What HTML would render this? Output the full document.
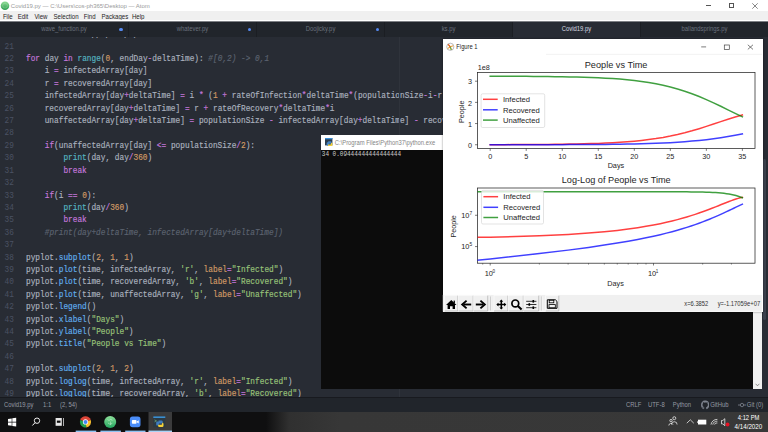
<!DOCTYPE html>
<html><head><meta charset="utf-8">
<style>
*{margin:0;padding:0;box-sizing:border-box}
html,body{width:768px;height:432px;overflow:hidden;background:#282c34;font-family:"Liberation Sans",sans-serif}
.a{position:absolute;white-space:pre}
#title{left:0;top:0;width:768px;height:11px;background:#fff}
#menu{left:0;top:11px;width:768px;height:9px;background:#f0f0f0}
#menuw{left:0;top:20px;width:768px;height:1px;background:#fff}
.mi{position:absolute;top:0.9px;font-size:6.1px;line-height:9px;color:#1e1e1e;transform:scaleY(1.15);transform-origin:0 6.5px}
#menusep{left:0;top:21px;width:768px;height:1px;background:#7d7f84}
#tabs{left:0;top:22px;width:768px;height:15px;background:#21252b}
.tab{position:absolute;top:0;height:15px;width:128px;border-left:1px solid #1b1e23;color:#6b717d;font-size:5.9px;line-height:15px;text-align:center}
.tt{display:inline-block;transform:scaleY(1.18);transform-origin:50% 9.4px}
.tab.act{background:#282c34;color:#d7dae0}
.dot{position:absolute;top:5.6px;width:3.6px;height:3.6px;border-radius:50%;background:#568af2}
#editor{left:0;top:37px;width:768px;height:360px;background:#282c34;overflow:hidden}
.gn{position:absolute;left:0;width:13.8px;text-align:right;font-family:"Liberation Mono",monospace;font-size:7.77px;line-height:10px;color:#4b5263;transform:scaleY(1.12);transform-origin:0 7.6px}
.ln{position:absolute;left:26px;font-family:"Liberation Mono",monospace;font-size:7.77px;letter-spacing:0.012px;line-height:10px;white-space:pre;transform:scaleY(1.12);transform-origin:0 7.6px;-webkit-text-stroke-width:0.15px}
.i{font-style:italic}
#status{left:0;top:396.7px;width:768px;height:15.3px;background:#21252b;border-top:0.6px solid #181a1f;color:#959aa3;font-size:5.9px}
#status .a{top:3.1px;line-height:9px;transform:scaleY(1.12);transform-origin:0 6.5px}
#taskbar{left:0;top:412px;width:768px;height:20px;background:linear-gradient(90deg,#0f0f10 0px,#0f0f10 266px,#303030 289px,#373737 340px,#383838 768px)}
#console{left:320.8px;top:134.8px;width:441.4px;height:254.2px;background:#0c0c0c}
#ctitle{left:0;top:0;width:441.4px;height:15px;background:#fff}
#figure{left:442.5px;top:39.2px;width:320.2px;height:272.6px;background:#fff;box-shadow:0 0 2px rgba(0,0,0,0.45)}
</style></head><body>
<div id="title" class="a">
  <svg class="a" style="left:0;top:0" width="12" height="11" viewBox="0 0 12 11"><defs><linearGradient id="tg" x1="0" y1="0" x2="0" y2="1"><stop offset="0" stop-color="#8fdc95"/><stop offset="1" stop-color="#2f9e52"/></linearGradient></defs><circle cx="5" cy="5.7" r="4.3" fill="url(#tg)"/><circle cx="5" cy="5.7" r="2.4" fill="none" stroke="#c9efcc" stroke-width="0.4" opacity="0.6"/></svg>
  <div class="a" style="left:10.8px;top:1.6px;font-size:6px;line-height:9px;color:#9a9a9a">Covid19.py — C:\Users\cos-ph365\Desktop — Atom</div>
  <div class="a" style="left:706px;top:5px;width:5.2px;height:0.7px;background:#555"></div>
  <div class="a" style="left:729px;top:3px;width:5px;height:5px;border:0.7px solid #555"></div>
  <svg class="a" style="left:752px;top:2.5px" width="6" height="6" viewBox="0 0 6 6"><path d="M0.3 0.3L5.7 5.7M5.7 0.3L0.3 5.7" stroke="#555" stroke-width="0.7"/></svg>
</div>
<div id="menu" class="a">
  <div class="mi" style="left:2.9px">File</div>
  <div class="mi" style="left:17.7px">Edit</div>
  <div class="mi" style="left:34.4px">View</div>
  <div class="mi" style="left:53.5px">Selection</div>
  <div class="mi" style="left:83.7px">Find</div>
  <div class="mi" style="left:101.5px">Packages</div>
  <div class="mi" style="left:131.9px">Help</div>
</div>
<div id="menuw" class="a"></div><div id="menusep" class="a"></div>
<div id="tabs" class="a">
  <div class="tab" style="left:0;border-left:none"><span class="tt">wave_function.py</span><div class="dot" style="left:119px"></div></div>
  <div class="tab" style="left:128px"><span class="tt">whatever.py</span><div class="dot" style="left:118.5px"></div></div>
  <div class="tab" style="left:256px"><span class="tt">Doojicky.py</span><div class="dot" style="left:118.5px"></div></div>
  <div class="tab" style="left:384px"><span class="tt">ks.py</span></div>
  <div class="tab act" style="left:512px"><span class="tt">Covid19.py</span></div>
  <div class="tab" style="left:640px"><span class="tt">ballandsprings.py</span></div>
</div>
<div id="editor" class="a">
<div class="gn" style="top:-7.81px"></div>
<div class="ln" style="top:-7.81px"><span style="color:#abb2bf">              pp p   p p</span></div>
<div class="gn" style="top:4.60px">21</div>
<div class="ln" style="top:4.60px"></div>
<div class="gn" style="top:17.01px">22</div>
<div class="ln" style="top:17.01px"><span style="color:#c678dd">for</span><span style="color:#abb2bf"> day </span><span style="color:#c678dd">in</span><span style="color:#abb2bf"> </span><span style="color:#56b6c2">range</span><span style="color:#abb2bf">(</span><span style="color:#d19a66">0</span><span style="color:#abb2bf">, endDay</span><span style="color:#c678dd">-</span><span style="color:#abb2bf">deltaTime): </span><span style="color:#5c6370" class=i>#[0,2) -&gt; 0,1</span></div>
<div class="gn" style="top:29.42px">23</div>
<div class="ln" style="top:29.42px"><span style="color:#abb2bf">    i </span><span style="color:#c678dd">=</span><span style="color:#abb2bf"> infectedArray[day]</span></div>
<div class="gn" style="top:41.83px">24</div>
<div class="ln" style="top:41.83px"><span style="color:#abb2bf">    r </span><span style="color:#c678dd">=</span><span style="color:#abb2bf"> recoveredArray[day]</span></div>
<div class="gn" style="top:54.24px">25</div>
<div class="ln" style="top:54.24px"><span style="color:#abb2bf">    infectedArray[day</span><span style="color:#c678dd">+</span><span style="color:#abb2bf">deltaTime] </span><span style="color:#c678dd">=</span><span style="color:#abb2bf"> i </span><span style="color:#c678dd">*</span><span style="color:#abb2bf"> (</span><span style="color:#d19a66">1</span><span style="color:#abb2bf"> </span><span style="color:#c678dd">+</span><span style="color:#abb2bf"> rateOfInfection</span><span style="color:#c678dd">*</span><span style="color:#abb2bf">deltaTime</span><span style="color:#c678dd">*</span><span style="color:#abb2bf">(populationSize</span><span style="color:#c678dd">-</span><span style="color:#abb2bf">i</span><span style="color:#c678dd">-</span><span style="color:#abb2bf">r)</span></div>
<div class="gn" style="top:66.65px">26</div>
<div class="ln" style="top:66.65px"><span style="color:#abb2bf">    recoveredArray[day</span><span style="color:#c678dd">+</span><span style="color:#abb2bf">deltaTime] </span><span style="color:#c678dd">=</span><span style="color:#abb2bf"> r </span><span style="color:#c678dd">+</span><span style="color:#abb2bf"> rateOfRecovery</span><span style="color:#c678dd">*</span><span style="color:#abb2bf">deltaTime</span><span style="color:#c678dd">*</span><span style="color:#abb2bf">i</span></div>
<div class="gn" style="top:79.06px">27</div>
<div class="ln" style="top:79.06px"><span style="color:#abb2bf">    unaffectedArray[day</span><span style="color:#c678dd">+</span><span style="color:#abb2bf">deltaTime] </span><span style="color:#c678dd">=</span><span style="color:#abb2bf"> populationSize </span><span style="color:#c678dd">-</span><span style="color:#abb2bf"> infectedArray[day</span><span style="color:#c678dd">+</span><span style="color:#abb2bf">deltaTime] </span><span style="color:#c678dd">-</span><span style="color:#abb2bf"> recoveredArray</span></div>
<div class="gn" style="top:91.47px">28</div>
<div class="ln" style="top:91.47px"></div>
<div class="gn" style="top:103.88px">29</div>
<div class="ln" style="top:103.88px"><span style="color:#abb2bf">    </span><span style="color:#c678dd">if</span><span style="color:#abb2bf">(unaffectedArray[day] </span><span style="color:#c678dd">&lt;=</span><span style="color:#abb2bf"> populationSize</span><span style="color:#c678dd">/</span><span style="color:#d19a66">2</span><span style="color:#abb2bf">):</span></div>
<div class="gn" style="top:116.29px">30</div>
<div class="ln" style="top:116.29px"><span style="color:#abb2bf">        </span><span style="color:#56b6c2">print</span><span style="color:#abb2bf">(day, day</span><span style="color:#c678dd">/</span><span style="color:#d19a66">360</span><span style="color:#abb2bf">)</span></div>
<div class="gn" style="top:128.70px">31</div>
<div class="ln" style="top:128.70px"><span style="color:#abb2bf">        </span><span style="color:#c678dd">break</span></div>
<div class="gn" style="top:141.11px">32</div>
<div class="ln" style="top:141.11px"></div>
<div class="gn" style="top:153.52px">33</div>
<div class="ln" style="top:153.52px"><span style="color:#abb2bf">    </span><span style="color:#c678dd">if</span><span style="color:#abb2bf">(i </span><span style="color:#c678dd">==</span><span style="color:#abb2bf"> </span><span style="color:#d19a66">0</span><span style="color:#abb2bf">):</span></div>
<div class="gn" style="top:165.93px">34</div>
<div class="ln" style="top:165.93px"><span style="color:#abb2bf">        </span><span style="color:#56b6c2">print</span><span style="color:#abb2bf">(day</span><span style="color:#c678dd">/</span><span style="color:#d19a66">360</span><span style="color:#abb2bf">)</span></div>
<div class="gn" style="top:178.34px">35</div>
<div class="ln" style="top:178.34px"><span style="color:#abb2bf">        </span><span style="color:#c678dd">break</span></div>
<div class="gn" style="top:190.75px">36</div>
<div class="ln" style="top:190.75px"><span style="color:#abb2bf">    </span><span style="color:#5c6370" class=i>#print(day+deltaTime, infectedArray[day+deltaTime])</span></div>
<div class="gn" style="top:203.16px">37</div>
<div class="ln" style="top:203.16px"></div>
<div class="gn" style="top:215.57px">38</div>
<div class="ln" style="top:215.57px"><span style="color:#abb2bf">pyplot.</span><span style="color:#61afef">subplot</span><span style="color:#abb2bf">(</span><span style="color:#d19a66">2</span><span style="color:#abb2bf">, </span><span style="color:#d19a66">1</span><span style="color:#abb2bf">, </span><span style="color:#d19a66">1</span><span style="color:#abb2bf">)</span></div>
<div class="gn" style="top:227.98px">39</div>
<div class="ln" style="top:227.98px"><span style="color:#abb2bf">pyplot.</span><span style="color:#61afef">plot</span><span style="color:#abb2bf">(time, infectedArray, </span><span style="color:#98c379">&#x27;r&#x27;</span><span style="color:#abb2bf">, </span><span style="color:#d19a66">label</span><span style="color:#c678dd">=</span><span style="color:#98c379">&quot;Infected&quot;</span><span style="color:#abb2bf">)</span></div>
<div class="gn" style="top:240.39px">40</div>
<div class="ln" style="top:240.39px"><span style="color:#abb2bf">pyplot.</span><span style="color:#61afef">plot</span><span style="color:#abb2bf">(time, recoveredArray, </span><span style="color:#98c379">&#x27;b&#x27;</span><span style="color:#abb2bf">, </span><span style="color:#d19a66">label</span><span style="color:#c678dd">=</span><span style="color:#98c379">&quot;Recovered&quot;</span><span style="color:#abb2bf">)</span></div>
<div class="gn" style="top:252.80px">41</div>
<div class="ln" style="top:252.80px"><span style="color:#abb2bf">pyplot.</span><span style="color:#61afef">plot</span><span style="color:#abb2bf">(time, unaffectedArray, </span><span style="color:#98c379">&#x27;g&#x27;</span><span style="color:#abb2bf">, </span><span style="color:#d19a66">label</span><span style="color:#c678dd">=</span><span style="color:#98c379">&quot;Unaffected&quot;</span><span style="color:#abb2bf">)</span></div>
<div class="gn" style="top:265.21px">42</div>
<div class="ln" style="top:265.21px"><span style="color:#abb2bf">pyplot.</span><span style="color:#61afef">legend</span><span style="color:#abb2bf">()</span></div>
<div class="gn" style="top:277.62px">43</div>
<div class="ln" style="top:277.62px"><span style="color:#abb2bf">pyplot.</span><span style="color:#61afef">xlabel</span><span style="color:#abb2bf">(</span><span style="color:#98c379">&quot;Days&quot;</span><span style="color:#abb2bf">)</span></div>
<div class="gn" style="top:290.03px">44</div>
<div class="ln" style="top:290.03px"><span style="color:#abb2bf">pyplot.</span><span style="color:#61afef">ylabel</span><span style="color:#abb2bf">(</span><span style="color:#98c379">&quot;People&quot;</span><span style="color:#abb2bf">)</span></div>
<div class="gn" style="top:302.44px">45</div>
<div class="ln" style="top:302.44px"><span style="color:#abb2bf">pyplot.</span><span style="color:#61afef">title</span><span style="color:#abb2bf">(</span><span style="color:#98c379">&quot;People vs Time&quot;</span><span style="color:#abb2bf">)</span></div>
<div class="gn" style="top:314.85px">46</div>
<div class="ln" style="top:314.85px"></div>
<div class="gn" style="top:327.26px">47</div>
<div class="ln" style="top:327.26px"><span style="color:#abb2bf">pyplot.</span><span style="color:#61afef">subplot</span><span style="color:#abb2bf">(</span><span style="color:#d19a66">2</span><span style="color:#abb2bf">, </span><span style="color:#d19a66">1</span><span style="color:#abb2bf">, </span><span style="color:#d19a66">2</span><span style="color:#abb2bf">)</span></div>
<div class="gn" style="top:339.67px">48</div>
<div class="ln" style="top:339.67px"><span style="color:#abb2bf">pyplot.</span><span style="color:#61afef">loglog</span><span style="color:#abb2bf">(time, infectedArray, </span><span style="color:#98c379">&#x27;r&#x27;</span><span style="color:#abb2bf">, </span><span style="color:#d19a66">label</span><span style="color:#c678dd">=</span><span style="color:#98c379">&quot;Infected&quot;</span><span style="color:#abb2bf">)</span></div>
<div class="gn" style="top:352.08px">49</div>
<div class="ln" style="top:352.08px"><span style="color:#abb2bf">pyplot.</span><span style="color:#61afef">loglog</span><span style="color:#abb2bf">(time, recoveredArray, </span><span style="color:#98c379">&#x27;b&#x27;</span><span style="color:#abb2bf">, </span><span style="color:#d19a66">label</span><span style="color:#c678dd">=</span><span style="color:#98c379">&quot;Recovered&quot;</span><span style="color:#abb2bf">)</span></div>
<div class="a" style="left:398.8px;top:0;width:0.8px;height:360px;background:#2f333b"></div>
<div class="a" style="left:763.3px;top:122px;width:3px;height:161px;background:#3a3f4b;border-radius:1.5px"></div>
</div>
<div id="status" class="a">
  <div class="a" style="left:4px">Covid19.py</div>
  <div class="a" style="left:43px">1:1</div>
  <div class="a" style="left:60px">(2, 54)</div>
  <div class="a" style="left:626px">CRLF</div>
  <div class="a" style="left:648px">UTF-8</div>
  <div class="a" style="left:672.8px">Python</div>
  <svg class="a" style="left:700.5px;top:3.6px" width="8.4" height="8.4" viewBox="0 0 16 16"><path fill="#7d838e" d="M8 0C3.58 0 0 3.58 0 8c0 3.54 2.29 6.53 5.47 7.59.4.07.55-.17.55-.38 0-.19-.01-.82-.01-1.49-2.01.37-2.53-.49-2.69-.94-.09-.23-.48-.94-.82-1.13-.28-.15-.68-.52-.01-.53.63-.01 1.08.58 1.23.82.72 1.21 1.87.87 2.33.66.07-.52.28-.87.51-1.07-1.78-.2-3.64-.89-3.64-3.95 0-.87.31-1.59.82-2.15-.08-.2-.36-1.02.08-2.12 0 0 .67-.21 2.2.82.64-.18 1.32-.27 2-.27.68 0 1.36.09 2 .27 1.53-1.04 2.2-.82 2.2-.82.44 1.1.16 1.92.08 2.12.51.56.82 1.27.82 2.15 0 3.07-1.87 3.75-3.65 3.95.29.25.54.73.54 1.48 0 1.07-.01 1.93-.01 2.2 0 .21.15.46.55.38A8.013 8.013 0 0016 8c0-4.42-3.58-8-8-8z"/></svg>
  <div class="a" style="left:710.2px">GitHub</div>
  <svg class="a" style="left:737.5px;top:5.5px" width="8" height="5" viewBox="0 0 8 5"><circle cx="4" cy="2.5" r="1.6" fill="none" stroke="#7d838e" stroke-width="0.8"/><path d="M0 2.5H2.4M5.6 2.5H8" stroke="#7d838e" stroke-width="0.8"/></svg>
  <div class="a" style="left:746.8px">Git (0)</div>
</div>
<div id="taskbar" class="a">
  <svg class="a" style="left:0;top:0" width="768" height="20" viewBox="0 412 768 20">
    <g fill="#ffffff">
      <path d="M8 418.9 L11.7 418.4 V421.8 H8Z M12.3 418.3 L16.2 417.8 V421.8 H12.3Z M8 422.4 H11.7 V425.8 L8 425.3Z M12.3 422.4 H16.2 V426.4 L12.3 425.9Z"/>
    </g>
    <circle cx="37" cy="420.7" r="2.7" fill="none" stroke="#fff" stroke-width="0.9"/>
    <path d="M35.1 422.6 L32.4 425.5" stroke="#fff" stroke-width="1"/>
    <rect x="55.6" y="418" width="6.2" height="7.8" fill="#e8e8e8"/><rect x="56.9" y="420.6" width="3.6" height="2.2" fill="#0b0b0c"/><rect x="63.2" y="418" width="0.8" height="8" fill="#d8d8d8"/>
    <!-- chrome -->
    <path d="M85.5 421.9 L90.76 419.98 A5.6 5.6 0 0 0 80.24 419.98Z" fill="#db4437"/><path d="M85.5 421.9 L80.24 419.98 A5.6 5.6 0 0 0 86.47 427.41Z" fill="#1e9e50"/><path d="M85.5 421.9 L86.47 427.41 A5.6 5.6 0 0 0 90.76 419.98Z" fill="#fbc02d"/><circle cx="85.5" cy="421.9" r="2.6" fill="#fff"/>
    <circle cx="85.5" cy="421.9" r="2" fill="#4285f4"/>
    <!-- atom-ish green -->
    <defs><linearGradient id="gg" x1="0" y1="0" x2="0" y2="1"><stop offset="0" stop-color="#8ee09a"/><stop offset="1" stop-color="#22a45e"/></linearGradient></defs>
    <circle cx="110.2" cy="422" r="6" fill="url(#gg)"/>
    <path d="M107.5 419.5 l1.5 1 l2 -1.5 l1.2 1.8 M108 423 l2 1.3 l2.3 -1 M110.6 421.5 v3.5" stroke="#d8f5dc" stroke-width="0.6" fill="none" opacity="0.8"/>
    <!-- zoom -->
    <rect x="129.9" y="416.6" width="10.6" height="10.6" rx="2.6" fill="#4a8cf7"/>
    <rect x="131.9" y="420" width="4.6" height="3.8" rx="0.8" fill="#fff"/>
    <path d="M136.8 421.6 L138.7 420.3 V423.5 L136.8 422.2Z" fill="#fff"/>
    <!-- python active -->
    <rect x="148.5" y="412" width="23.5" height="20" fill="#3b3b3c"/>
    <g transform="translate(0 0.9)"><rect x="153.3" y="415.5" width="12" height="11" fill="#2b3a44"/>
    <rect x="153.3" y="415.5" width="12" height="1.6" fill="#3b8ed0"/>
    <path d="M154.5 419 l2 1 -2 1" stroke="#7fc27f" stroke-width="0.6" fill="none"/>
    <path d="M158.5 419.5 h3 a1.2 1.2 0 0 1 1.2 1.2 v2 h-3 a1 1 0 0 0 -1 1 v1 h-1.3 a1.2 1.2 0 0 1 -1.2 -1.2 v-1.8 a1.2 1.2 0 0 1 1.2 -1.2 h1.3z" fill="#3e7bbd"/>
    <path d="M163.5 422.5 v2.3 a1.2 1.2 0 0 1 -1.2 1.2 h-3 a1.2 1.2 0 0 1 -1.2 -1.2 v-1 h3 a1 1 0 0 0 1 -1 v-1 h0.2 a1.2 1.2 0 0 1 1.2 1.2z" fill="#f5d23a"/>
    </g>
    <g fill="#8ec3f2">
      <rect x="75.7" y="430.6" width="20.5" height="1.4"/>
      <rect x="100.4" y="430.6" width="20.5" height="1.4"/>
      <rect x="125.2" y="430.6" width="20.3" height="1.4"/>
      <rect x="148.5" y="430.6" width="23.5" height="1.4" fill="#a9d3f7"/>
    </g>
    <!-- tray -->
    <g stroke="#fff" stroke-width="0.7" fill="none">
      <circle cx="674.3" cy="418.2" r="1.5"/>
      <path d="M671.5 424.5 a2.8 2.8 0 0 1 5.6 0"/>
      <circle cx="671" cy="420.6" r="1.2"/>
      <path d="M668.8 425.5 a2.2 2.2 0 0 1 4.2 -0.8"/>
      <path d="M686.8 423.2 L690.3 419.8 L693.8 423.2"/>
      <path d="M711 424.6 a6 6 0 0 1 6.4 -5.2 M712.8 424.6 a4 4 0 0 1 4.6 -3.4 M714.6 424.6 a2.2 2.2 0 0 1 2.8 -1.6" />
      <path d="M721.5 420.5 h1.3 l2 -1.8 v7 l-2 -1.8 h-1.3z"/>
    </g>
    <rect x="698" y="419.7" width="8.3" height="4.8" fill="#fff"/>
    <rect x="697.3" y="421.3" width="0.7" height="1.6" fill="#fff"/>
    <circle cx="727.6" cy="424.5" r="1.9" fill="#e81123"/>
    <text transform="translate(748.6 419.6) scale(1 1.12)" font-size="5.8" fill="#fff" text-anchor="middle" font-family="Liberation Sans">4:12 PM</text>
    <text transform="translate(748.4 428.8) scale(1 1.12)" font-size="6.2" fill="#fff" text-anchor="middle" font-family="Liberation Sans">4/14/2020</text>
  </svg>
</div>
<div id="console" class="a">
  <div id="ctitle" class="a">
    <svg class="a" style="left:4.2px;top:3px" width="8" height="8" viewBox="0 0 8 8"><rect x="0" y="0" width="7.4" height="7.4" fill="#2c3e50"/><rect x="0" y="0" width="7.4" height="1.3" fill="#3c8fd8"/><path d="M3.5 3.2h2a1 1 0 0 1 1 1v1.5h-2a.8.8 0 0 0-.8.8v1.3h-1a1 1 0 0 1-1-1v-1.6a1 1 0 0 1 1-1z" fill="#4584c4"/><path d="M7.4 5.6v1.6a1 1 0 0 1-1 1h-2.4a1 1 0 0 1-1-1v-.6h2.2a.8.8 0 0 0 .8-.8v-1h.4a1 1 0 0 1 1 .8z" fill="#f3d13e"/></svg>
    <div class="a" style="left:14px;top:4.1px;font-size:5.85px;line-height:9px;color:#858585;transform:scaleY(1.15);transform-origin:0 6.5px">C:\Program Files\Python37\python.exe</div>
  </div>
  <div class="a" style="left:1px;top:16px;font-family:'Liberation Mono',monospace;font-size:6px;line-height:8px;color:#c8c8c8;transform:scaleY(1.25);transform-origin:0 6px">34 0.09444444444444444</div>
  <div class="a" style="left:432.4px;top:14.7px;width:9px;height:239.5px;background:#f0f0f0"></div>
  <svg class="a" style="left:434.5px;top:248px" width="5" height="4" viewBox="0 0 5 4"><path d="M0.6 0.8 L2.5 2.8 L4.4 0.8" stroke="#606060" stroke-width="0.7" fill="none"/></svg>
</div>
<div id="figure" class="a"></div>
<svg class="a" style="left:0;top:0" width="768" height="432" viewBox="0 0 768 432" fill="none" font-family="Liberation Sans">
  <defs><clipPath id="c1"><rect x="477.6" y="72.4" width="277.4" height="76.2"/></clipPath><clipPath id="c2"><rect x="477.6" y="188" width="277.4" height="75.2"/></clipPath></defs>
  <!-- figure title bar -->
  <circle cx="450.3" cy="46.8" r="3.6" fill="#fff" stroke="#777" stroke-width="0.5"/>
  <path d="M450.3 46.8 L448.2 44.3 M450.3 46.8 L453.2 45.8 M450.3 46.8 L451.3 49.8 M450.3 46.8 L447.6 48.6" stroke-width="1.1" stroke="#e8a33b"/>
  <path d="M450.3 46.8 L448.2 44.3" stroke="#e05a2a" stroke-width="1.1"/>
  <path d="M450.3 46.8 L451.3 49.8" stroke="#5aa64b" stroke-width="1.1"/>
  <text transform="translate(456.3 49.1) scale(1 1.15)" font-size="5.8" fill="#222">Figure 1</text>
  <path d="M701.2 46.9 H706.1" stroke="#444" stroke-width="0.7"/>
  <rect x="724.3" y="45" width="5" height="4.5" stroke="#444" stroke-width="0.7"/>
  <path d="M747.8 44.8 L753 49.4 M753 44.8 L747.8 49.4" stroke="#444" stroke-width="0.7"/>
  <path d="M546 54.4 H762" stroke="#f0f0f0" stroke-width="0.8"/>
  <!-- toolbar -->
  <rect x="442.8" y="294.9" width="319.1" height="16.7" fill="#f0f0f0"/>
  <rect x="444.70" y="295.6" width="13.20" height="15.4" fill="#f0f0f0" stroke="#fdfdfd" stroke-width="0.6"/><path d="M457.90 295.6 V311 H444.70" stroke="#a0a0a0" stroke-width="0.6"/><rect x="458.50" y="295.6" width="14.70" height="15.4" fill="#f0f0f0" stroke="#fdfdfd" stroke-width="0.6"/><path d="M473.20 295.6 V311 H458.50" stroke="#a0a0a0" stroke-width="0.6"/><rect x="473.80" y="295.6" width="13.90" height="15.4" fill="#f0f0f0" stroke="#fdfdfd" stroke-width="0.6"/><path d="M487.70 295.6 V311 H473.80" stroke="#a0a0a0" stroke-width="0.6"/><rect x="494.00" y="295.6" width="13.90" height="15.4" fill="#f0f0f0" stroke="#fdfdfd" stroke-width="0.6"/><path d="M507.90 295.6 V311 H494.00" stroke="#a0a0a0" stroke-width="0.6"/><rect x="508.50" y="295.6" width="14.80" height="15.4" fill="#f0f0f0" stroke="#fdfdfd" stroke-width="0.6"/><path d="M523.30 295.6 V311 H508.50" stroke="#a0a0a0" stroke-width="0.6"/><rect x="523.90" y="295.6" width="14.80" height="15.4" fill="#f0f0f0" stroke="#fdfdfd" stroke-width="0.6"/><path d="M538.70 295.6 V311 H523.90" stroke="#a0a0a0" stroke-width="0.6"/><rect x="545.70" y="295.6" width="13.10" height="15.4" fill="#f0f0f0" stroke="#fdfdfd" stroke-width="0.6"/><path d="M558.80 295.6 V311 H545.70" stroke="#a0a0a0" stroke-width="0.6"/><path d="M490.7 296.5 V310.5" stroke="#a0a0a0" stroke-width="0.6"/><path d="M491.3 296.5 V310.5" stroke="#fff" stroke-width="0.6"/><path d="M541.4 296.5 V310.5" stroke="#a0a0a0" stroke-width="0.6"/><path d="M542.0 296.5 V310.5" stroke="#fff" stroke-width="0.6"/><path d="M446 305 L451.3 300 L456.5 305 H455 V309 H452.6 V306.3 H450 V309 H447.6 V305Z" fill="#000"/><rect x="453.6" y="300.6" width="1.3" height="2.5" fill="#000"/><path d="M471.2 304.5 H464" stroke="#000" stroke-width="1.9"/><path d="M466.6 300.6 L462.2 304.5 L466.6 308.4" stroke="#000" stroke-width="1.9" fill="none" stroke-linejoin="miter"/><path d="M475.8 304.5 H483" stroke="#000" stroke-width="1.9"/><path d="M480.4 300.6 L484.8 304.5 L480.4 308.4" stroke="#000" stroke-width="1.9" fill="none"/><path d="M501.3 300.6 V308.6 M497.3 304.6 H505.3" stroke="#000" stroke-width="1.5"/><path d="M501.3 299.6 L499.4 301.8 H503.2Z M501.3 309.6 L499.4 307.4 H503.2Z M496.3 304.6 L498.5 302.7 V306.5Z M506.3 304.6 L504.1 302.7 V306.5Z" fill="#000"/><circle cx="515.3" cy="303.4" r="3.4" stroke="#000" stroke-width="1.7" fill="none"/><path d="M517.8 305.9 L521.6 309.6" stroke="#000" stroke-width="2.1"/><path d="M526.2 301.3 H536.4 M526.2 304.5 H536.4 M526.2 307.7 H536.4" stroke="#000" stroke-width="0.8"/><rect x="532.5" y="300" width="1.6" height="2.6" fill="#000"/><rect x="528.5" y="303.2" width="1.6" height="2.6" fill="#000"/><rect x="532.5" y="306.4" width="1.6" height="2.6" fill="#000"/><path d="M547.3 299.8 H555.4 L557 301.4 V308.3 H547.3Z" stroke="#000" stroke-width="1" fill="none"/><rect x="549.2" y="300.2" width="4.6" height="2.6" stroke="#000" stroke-width="0.8" fill="none"/><rect x="549" y="304.6" width="6.3" height="3.2" stroke="#000" stroke-width="0.8" fill="none"/>
  <text transform="translate(684.3 305.6) scale(1 1.18)" font-size="5.8" fill="#333">x=6.3852</text>
  <text transform="translate(717.7 305.6) scale(1 1.18)" font-size="5.86" fill="#333">y=-1.17059e+07</text>
  <!-- top axes -->
  <rect x="477.6" y="72.4" width="277.4" height="76.2" stroke="#262626" stroke-width="0.75"/><rect x="477.6" y="188" width="277.4" height="75.2" stroke="#262626" stroke-width="0.75"/><path d="M475 144.74 H477.6" stroke="#262626" stroke-width="0.6"/><text x="472" y="147.94" font-size="7.25" fill="#262626" text-anchor="end">0</text><path d="M475 123.56 H477.6" stroke="#262626" stroke-width="0.6"/><text x="472" y="126.76" font-size="7.25" fill="#262626" text-anchor="end">1</text><path d="M475 102.38 H477.6" stroke="#262626" stroke-width="0.6"/><text x="472" y="105.58" font-size="7.25" fill="#262626" text-anchor="end">2</text><path d="M475 81.20 H477.6" stroke="#262626" stroke-width="0.6"/><text x="472" y="84.40" font-size="7.25" fill="#262626" text-anchor="end">3</text><path d="M490.20 148.6 V150.9" stroke="#262626" stroke-width="0.6"/><text x="490.20" y="159.1" font-size="7.25" fill="#262626" text-anchor="middle">0</text><path d="M526.23 148.6 V150.9" stroke="#262626" stroke-width="0.6"/><text x="526.23" y="159.1" font-size="7.25" fill="#262626" text-anchor="middle">5</text><path d="M562.25 148.6 V150.9" stroke="#262626" stroke-width="0.6"/><text x="562.25" y="159.1" font-size="7.25" fill="#262626" text-anchor="middle">10</text><path d="M598.27 148.6 V150.9" stroke="#262626" stroke-width="0.6"/><text x="598.27" y="159.1" font-size="7.25" fill="#262626" text-anchor="middle">15</text><path d="M634.30 148.6 V150.9" stroke="#262626" stroke-width="0.6"/><text x="634.30" y="159.1" font-size="7.25" fill="#262626" text-anchor="middle">20</text><path d="M670.33 148.6 V150.9" stroke="#262626" stroke-width="0.6"/><text x="670.33" y="159.1" font-size="7.25" fill="#262626" text-anchor="middle">25</text><path d="M706.35 148.6 V150.9" stroke="#262626" stroke-width="0.6"/><text x="706.35" y="159.1" font-size="7.25" fill="#262626" text-anchor="middle">30</text><path d="M742.38 148.6 V150.9" stroke="#262626" stroke-width="0.6"/><text x="742.38" y="159.1" font-size="7.25" fill="#262626" text-anchor="middle">35</text><text x="477.8" y="70.2" font-size="7.25" fill="#262626">1e8</text><text x="616.1" y="68.4" font-size="9.18" fill="#262626" text-anchor="middle">People vs Time</text><text x="615.9" y="168.4" font-size="7.25" fill="#262626" text-anchor="middle">Days</text><text transform="translate(464.3 111.8) rotate(-90)" x="0" y="0" font-size="7.2" fill="#262626" text-anchor="middle">People</text><text x="616.2" y="183" font-size="9.16" fill="#262626" text-anchor="middle">Log-Log of People vs Time</text><path d="M482.73 263.2 V264.6" stroke="#262626" stroke-width="0.5"/><path d="M539.36 263.2 V264.6" stroke="#262626" stroke-width="0.5"/><path d="M568.11 263.2 V264.6" stroke="#262626" stroke-width="0.5"/><path d="M588.52 263.2 V264.6" stroke="#262626" stroke-width="0.5"/><path d="M604.34 263.2 V264.6" stroke="#262626" stroke-width="0.5"/><path d="M617.27 263.2 V264.6" stroke="#262626" stroke-width="0.5"/><path d="M628.20 263.2 V264.6" stroke="#262626" stroke-width="0.5"/><path d="M637.67 263.2 V264.6" stroke="#262626" stroke-width="0.5"/><path d="M646.03 263.2 V264.6" stroke="#262626" stroke-width="0.5"/><path d="M702.66 263.2 V264.6" stroke="#262626" stroke-width="0.5"/><path d="M731.41 263.2 V264.6" stroke="#262626" stroke-width="0.5"/><path d="M490.20 263.2 V265.5" stroke="#262626" stroke-width="0.6"/><path d="M653.50 263.2 V265.5" stroke="#262626" stroke-width="0.6"/><text x="484.70" y="275.5" font-size="7.4" fill="#262626">10</text><text x="492.50" y="272.6" font-size="4.6" fill="#262626">0</text><text x="648.00" y="275.5" font-size="7.4" fill="#262626">10</text><text x="655.80" y="272.6" font-size="4.6" fill="#262626">1</text><path d="M475 246.57 H477.6" stroke="#262626" stroke-width="0.6"/><text x="461.2" y="249.17" font-size="7.4" fill="#262626">10</text><text x="469.6" y="246.07" font-size="4.8" fill="#262626">5</text><path d="M475 215.27 H477.6" stroke="#262626" stroke-width="0.6"/><text x="461.2" y="217.87" font-size="7.4" fill="#262626">10</text><text x="469.6" y="214.77" font-size="4.8" fill="#262626">7</text><text x="615.6" y="286" font-size="7.25" fill="#262626" text-anchor="middle">Days</text><text transform="translate(456.4 226.4) rotate(-90)" x="0" y="0" font-size="7.2" fill="#262626" text-anchor="middle">People</text>
  <g clip-path="url(#c1)" stroke-width="1.5"><path d="M490.20,144.67 L497.40,144.66 L504.61,144.64 L511.81,144.61 L519.02,144.59 L526.23,144.55 L533.43,144.51 L540.63,144.46 L547.84,144.40 L555.04,144.32 L562.25,144.23 L569.45,144.12 L576.66,143.99 L583.87,143.82 L591.07,143.62 L598.27,143.38 L605.48,143.09 L612.68,142.74 L619.89,142.31 L627.10,141.80 L634.30,141.19 L641.50,140.46 L648.71,139.60 L655.91,138.59 L663.12,137.41 L670.33,136.05 L677.53,134.49 L684.74,132.74 L691.94,130.79 L699.14,128.66 L706.35,126.39 L713.55,124.02 L720.76,121.61 L727.97,119.23 L735.17,116.97 L742.38,114.89" stroke="#ff0000" stroke-opacity="0.75" stroke-linecap="square"/><path d="M490.20,144.74 L497.40,144.74 L504.61,144.73 L511.81,144.73 L519.02,144.72 L526.23,144.71 L533.43,144.70 L540.63,144.69 L547.84,144.68 L555.04,144.66 L562.25,144.64 L569.45,144.62 L576.66,144.59 L583.87,144.55 L591.07,144.51 L598.27,144.45 L605.48,144.38 L612.68,144.30 L619.89,144.20 L627.10,144.08 L634.30,143.94 L641.50,143.77 L648.71,143.55 L655.91,143.30 L663.12,143.00 L670.33,142.64 L677.53,142.21 L684.74,141.71 L691.94,141.12 L699.14,140.43 L706.35,139.64 L713.55,138.74 L720.76,137.72 L727.97,136.58 L735.17,135.33 L742.38,133.97" stroke="#0000ff" stroke-opacity="0.75" stroke-linecap="square"/><path d="M490.20,76.20 L497.40,76.22 L504.61,76.25 L511.81,76.27 L519.02,76.31 L526.23,76.35 L533.43,76.40 L540.63,76.46 L547.84,76.54 L555.04,76.63 L562.25,76.74 L569.45,76.88 L576.66,77.04 L583.87,77.24 L591.07,77.49 L598.27,77.78 L605.48,78.14 L612.68,78.58 L619.89,79.10 L627.10,79.73 L634.30,80.49 L641.50,81.39 L648.71,82.46 L655.91,83.72 L663.12,85.20 L670.33,86.93 L677.53,88.91 L684.74,91.17 L691.94,93.71 L699.14,96.52 L706.35,99.58 L713.55,102.86 L720.76,106.28 L727.97,109.80 L735.17,113.32 L742.38,116.76" stroke="#008000" stroke-opacity="0.75" stroke-linecap="square"/></g>
  <g clip-path="url(#c2)" stroke-width="1.5"><path d="M470.00,237.20 L490.20,237.20 L539.36,235.84 L568.11,234.48 L588.52,233.12 L604.34,231.77 L617.27,230.41 L628.20,229.05 L637.67,227.70 L646.03,226.35 L653.50,225.00 L660.26,223.65 L666.43,222.30 L672.11,220.96 L677.36,219.62 L682.26,218.29 L686.83,216.97 L691.13,215.65 L695.19,214.34 L699.02,213.05 L702.66,211.76 L706.12,210.50 L709.42,209.25 L712.57,208.03 L715.59,206.84 L718.48,205.68 L721.27,204.56 L723.94,203.48 L726.52,202.46 L729.01,201.50 L731.41,200.60 L733.74,199.77 L735.99,199.03 L738.17,198.36 L740.29,197.78 L742.35,197.29" stroke="#ff0000" stroke-opacity="0.75" stroke-linecap="square"/><path d="M470.00,261.00 L490.20,259.04 L539.36,253.61 L568.11,250.12 L588.52,247.41 L604.34,245.11 L617.27,243.07 L628.20,241.20 L637.67,239.45 L646.03,237.79 L653.50,236.19 L660.26,234.65 L666.43,233.14 L672.11,231.67 L677.36,230.22 L682.26,228.79 L686.83,227.38 L691.13,225.99 L695.19,224.61 L699.02,223.24 L702.66,221.89 L706.12,220.55 L709.42,219.22 L712.57,217.91 L715.59,216.61 L718.48,215.33 L721.27,214.07 L723.94,212.84 L726.52,211.63 L729.01,210.45 L731.41,209.31 L733.74,208.20 L735.99,207.13 L738.17,206.11 L740.29,205.14 L742.35,204.22" stroke="#0000ff" stroke-opacity="0.75" stroke-linecap="square"/><path d="M470.00,191.65 L490.20,191.65 L539.36,191.65 L568.11,191.65 L588.52,191.65 L604.34,191.66 L617.27,191.66 L628.20,191.67 L637.67,191.68 L646.03,191.69 L653.50,191.70 L660.26,191.71 L666.43,191.73 L672.11,191.75 L677.36,191.77 L682.26,191.80 L686.83,191.84 L691.13,191.88 L695.19,191.94 L699.02,192.00 L702.66,192.08 L706.12,192.18 L709.42,192.29 L712.57,192.43 L715.59,192.60 L718.48,192.80 L721.27,193.04 L723.94,193.32 L726.52,193.65 L729.01,194.03 L731.41,194.48 L733.74,194.99 L735.99,195.57 L738.17,196.22 L740.29,196.94 L742.35,197.73" stroke="#008000" stroke-opacity="0.75" stroke-linecap="square"/></g>
  <rect x="481.1" y="93.8" width="63.60" height="33.70" rx="1.5" fill="#fff" fill-opacity="0.8" stroke="#d0d0d0" stroke-width="0.6"/><path d="M483.00 99.30 H497.70" stroke="#ff0000" stroke-opacity="0.75" stroke-width="1.5"/><text x="502.90" y="102.00" font-size="7.65" fill="#262626">Infected</text><path d="M483.00 109.80 H497.70" stroke="#0000ff" stroke-opacity="0.75" stroke-width="1.5"/><text x="502.90" y="112.50" font-size="7.65" fill="#262626">Recovered</text><path d="M483.00 120.10 H497.70" stroke="#008000" stroke-opacity="0.75" stroke-width="1.5"/><text x="502.90" y="122.80" font-size="7.65" fill="#262626">Unaffected</text><rect x="481.5" y="190.4" width="62.00" height="33.60" rx="1.5" fill="#fff" fill-opacity="0.8" stroke="#d0d0d0" stroke-width="0.6"/><path d="M483.40 196.70 H498.10" stroke="#ff0000" stroke-opacity="0.75" stroke-width="1.5"/><text x="503.30" y="199.40" font-size="7.65" fill="#262626">Infected</text><path d="M483.40 207.30 H498.10" stroke="#0000ff" stroke-opacity="0.75" stroke-width="1.5"/><text x="503.30" y="210.00" font-size="7.65" fill="#262626">Recovered</text><path d="M483.40 217.50 H498.10" stroke="#008000" stroke-opacity="0.75" stroke-width="1.5"/><text x="503.30" y="220.20" font-size="7.65" fill="#262626">Unaffected</text>
</svg>
</body></html>
